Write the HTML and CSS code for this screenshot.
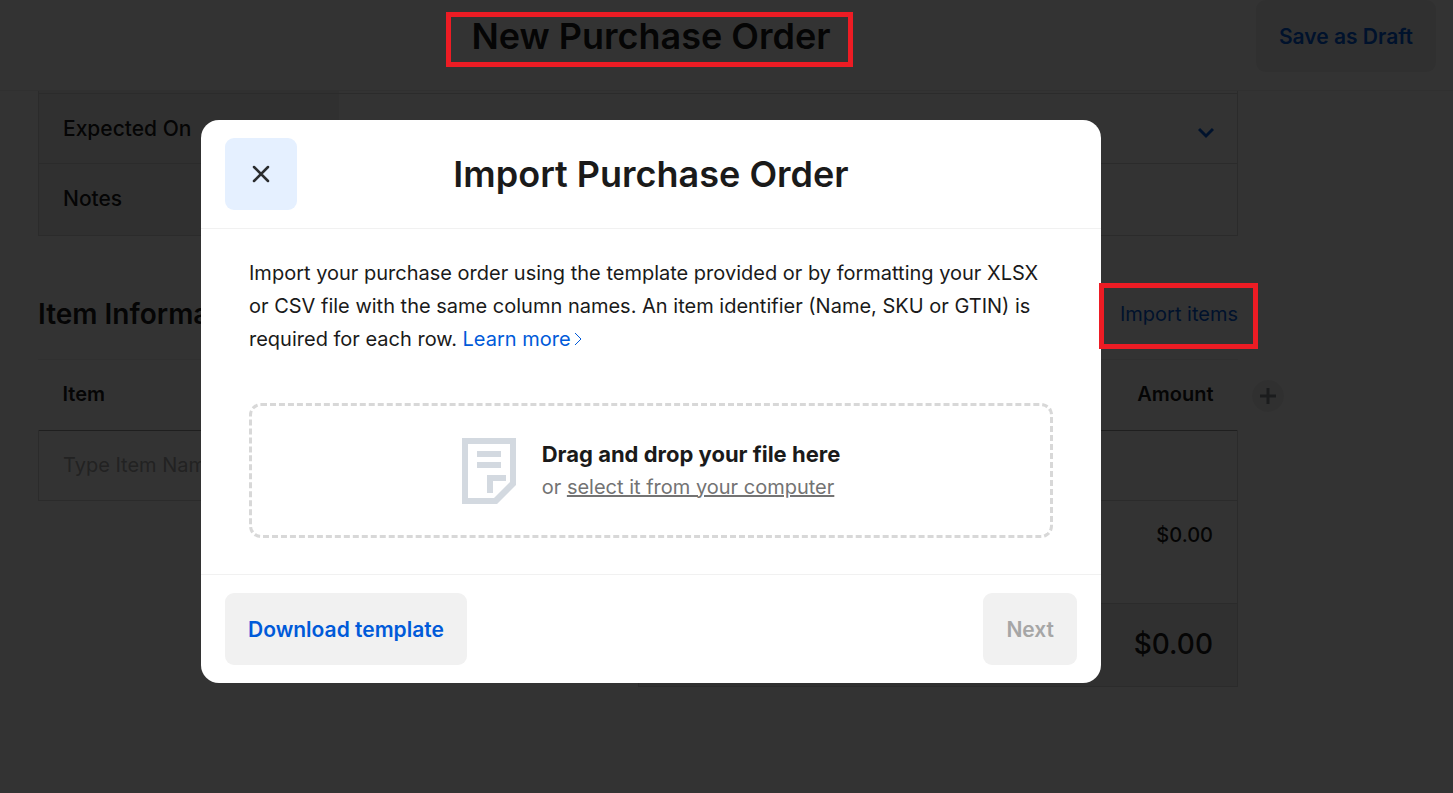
FILE: index.html
```html
<!DOCTYPE html>
<html lang="en">
<head>
    <meta charset="UTF-8">
    <meta name="viewport" content="width=device-width, initial-scale=1.0">
    <title>New Purchase Order</title>
    <link rel="stylesheet" href="styles.css">
</head>
<body>
    <header class="page-header">
        <h1>New Purchase Order</h1>
        <button class="btn btn-link" type="button">Save as Draft</button>
    </header>

    <main class="page">
        <section class="details">
            <div class="detail-row detail-row-cut">
                <div class="detail-label"></div>
            </div>
            <div class="detail-row">
                <label class="detail-label" for="expected">Expected On</label>
                <div class="detail-value">
                    <select id="expected"><option></option></select>
                    <svg class="chevron" width="16" height="12" viewBox="0 0 16 12"><path d="M1 2l7 7 7-7"/></svg>
                </div>
            </div>
            <div class="detail-row">
                <label class="detail-label" for="notes">Notes</label>
                <div class="detail-value"><input id="notes" type="text"></div>
            </div>
        </section>

        <div class="section-head">
            <h2>Item Information</h2>
            <a href="#">Import items</a>
        </div>

        <table class="items">
            <thead>
                <tr><th>Item</th><th class="num">Amount</th></tr>
            </thead>
            <tbody>
                <tr><td colspan="2"><input type="text" placeholder="Type Item Name" aria-label="Item"></td></tr>
            </tbody>
        </table>
        <button class="add-column" type="button" aria-label="Add column">
            <svg width="16" height="16" viewBox="0 0 16 16"><path d="M8 0v16M0 8h16"/></svg>
        </button>

        <div class="totals">
            <div class="subtotal">$0.00</div>
            <div class="total">$0.00</div>
        </div>
    </main>

    <div class="backdrop">
        <div class="modal" role="dialog" aria-labelledby="modal-title">
            <div class="modal-header">
                <button class="close" type="button" aria-label="Close">
                    <svg width="18" height="18" viewBox="0 0 18 18"><path d="M2 2l14 14M16 2L2 16"/></svg>
                </button>
                <h2 id="modal-title">Import Purchase Order</h2>
            </div>
            <div class="modal-body">
                <p>Import your purchase order using the template provided or by formatting your XLSX or CSV file with the same column names. An item identifier (Name, SKU or GTIN) is required for each row. <a href="#">Learn more<svg width="12" height="14" viewBox="0 0 12 14"><path d="M4 1l6 6-6 6"/></svg></a></p>
                <div class="dropzone">
                    <svg width="54" height="66" viewBox="0 0 54 66">
                        <path d="M0 0h54v47L35 66H0zM6 6v54h26l16-16V6z" fill-rule="evenodd"/>
                        <path d="M15 13h24v6H15zM15 24h24v6H15zM25 37h19v6H31v12h-6z"/>
                    </svg>
                    <div>
                        <h3>Drag and drop your file here</h3>
                        <div class="drop-hint">or <a href="#">select it from your computer</a></div>
                    </div>
                </div>
            </div>
            <div class="modal-footer">
                <button class="btn btn-link" type="button">Download template</button>
                <button class="btn" type="button" disabled>Next</button>
            </div>
        </div>
    </div>

    <div class="highlight highlight-title"></div>
    <div class="highlight highlight-import"></div>
</body>
</html>
```
FILE: styles.css
```css
* {
    margin: 0;
    padding: 0;
    box-sizing: border-box;
}

:root {
    --blue: #005ad9;
    --text: #1a1a1a;
    --gray: #f1f1f1;
    --border: #d8d8d8;
    --red: #ed1c24;
}

body {
    font-family: Inter, "Liberation Sans", sans-serif;
    font-size: 20px;
    line-height: 33px;
    color: var(--text);
    background: #fff;
    min-height: 100vh;
    overflow: hidden;
}

h1, h2, h3 {
    font-weight: 600;
}

a {
    color: var(--blue);
    text-decoration: none;
}

input, select, button {
    font: inherit;
    color: inherit;
    border: none;
    background: none;
}

svg {
    flex: none;
    fill: none;
}

.btn {
    height: 72px;
    padding: 0 23px;
    border-radius: 9px;
    background: var(--gray);
    font-size: 21px;
    font-weight: 600;
}

.btn-link {
    color: var(--blue);
}

.btn:disabled {
    color: #a6a6a6;
}

/* Page behind the dialog */
.page-header {
    display: flex;
    align-items: flex-start;
    height: 91px;
    padding: 0 17px 0 46px;
    border-bottom: 1px solid var(--gray);
}

.page-header h1 {
    flex: 1;
    text-align: center;
    font-size: 36px;
    line-height: 72px;
}

.page {
    display: grid;
    grid-template-columns: 1fr 32px;
    column-gap: 14px;
    padding: 0 169px 0 38px;
}

.details, .section-head, .items, .totals {
    grid-column: 1;
}

.details {
    border: 1px solid var(--border);
    border-top: none;
}

.detail-row {
    display: grid;
    grid-template-columns: 300px 1fr;
    height: 70px;
    border-top: 1px solid var(--border);
}

.detail-row-cut {
    height: 2px;
    border-top: none;
}

.detail-row:last-child {
    height: 72px;
}

.detail-label {
    padding: 18px 24px;
    background: var(--gray);
    font-size: 21px;
    font-weight: 500;
}

.detail-row-cut .detail-label {
    padding: 0;
}

.detail-value {
    display: flex;
    align-items: center;
    padding: 0 23px;
}

.detail-value input, .detail-value select {
    flex: 1;
    appearance: none;
}

.chevron {
    margin-top: 8px;
    stroke: var(--blue);
    stroke-width: 3;
}

.section-head {
    display: flex;
    justify-content: space-between;
    align-items: center;
    height: 124px;
    padding-top: 34px;
    border-bottom: 1px solid var(--gray);
}

.section-head h2 {
    font-size: 28px;
}

.items {
    border-collapse: collapse;
    width: 100%;
}

.items th {
    height: 70px;
    padding: 0 24px;
    text-align: left;
    font-weight: 600;
}

.items .num {
    text-align: right;
}

.items td {
    height: 70px;
    padding: 0 24px;
    border: 1px solid var(--border);
    border-top-color: #999;
}

.items input {
    width: 100%;
}

.items input::placeholder {
    color: #aaa;
}

.add-column {
    display: flex;
    align-items: center;
    justify-content: center;
    width: 32px;
    height: 32px;
    margin-top: 20px;
    border-radius: 50%;
    background: var(--gray);
}

.add-column svg {
    stroke: #858b90;
    stroke-width: 3;
}

.totals {
    justify-self: end;
    width: 50%;
    border: 1px solid var(--border);
    border-top: none;
    text-align: right;
    font-weight: 500;
}

.subtotal {
    height: 102px;
    padding: 18px 24px;
}

.total {
    height: 83px;
    padding: 24px;
    border-top: 1px solid var(--border);
    background: var(--gray);
    font-size: 28px;
}

/* Dialog */
.backdrop {
    position: fixed;
    inset: 0;
    display: flex;
    justify-content: center;
    align-items: flex-start;
    padding: 120px 151px 0 0;
    background: rgba(0, 0, 0, 0.8);
}

.modal {
    width: 900px;
    max-width: 100%;
    border-radius: 18px;
    background: #fff;
}

.modal-header {
    display: grid;
    grid-template-columns: 72px 1fr 72px;
    align-items: center;
    padding: 18px 24px;
    border-bottom: 1px solid var(--gray);
}

.modal-header h2 {
    text-align: center;
    font-size: 36px;
}

.close {
    display: flex;
    align-items: center;
    justify-content: center;
    height: 72px;
    border-radius: 9px;
    background: #e5f0ff;
}

.close svg {
    stroke: #2b2d2f;
    stroke-width: 2.5;
    stroke-linecap: round;
}

.modal-body {
    padding: 28px 48px 36px;
}

.modal-body p svg {
    stroke: var(--blue);
}

.dropzone {
    display: flex;
    align-items: center;
    justify-content: center;
    gap: 26px;
    height: 135px;
    margin-top: 47px;
    border: 3px dashed var(--border);
    border-radius: 12px;
}

.dropzone svg {
    fill: #d3d9e0;
}

.dropzone h3 {
    font-size: 22px;
    font-weight: 700;
}

.drop-hint, .drop-hint a {
    color: #737373;
}

.drop-hint a {
    text-decoration: underline;
    text-decoration-thickness: 2px;
}

.modal-footer {
    display: flex;
    justify-content: space-between;
    padding: 18px 24px;
    border-top: 1px solid var(--gray);
}

/* Callout frames */
.highlight {
    position: absolute;
    border: 5px solid var(--red);
}

.highlight-title {
    left: 446px;
    top: 12px;
    width: 407px;
    height: 55px;
}

.highlight-import {
    left: 1099px;
    top: 283px;
    width: 159px;
    height: 66px;
}
```
